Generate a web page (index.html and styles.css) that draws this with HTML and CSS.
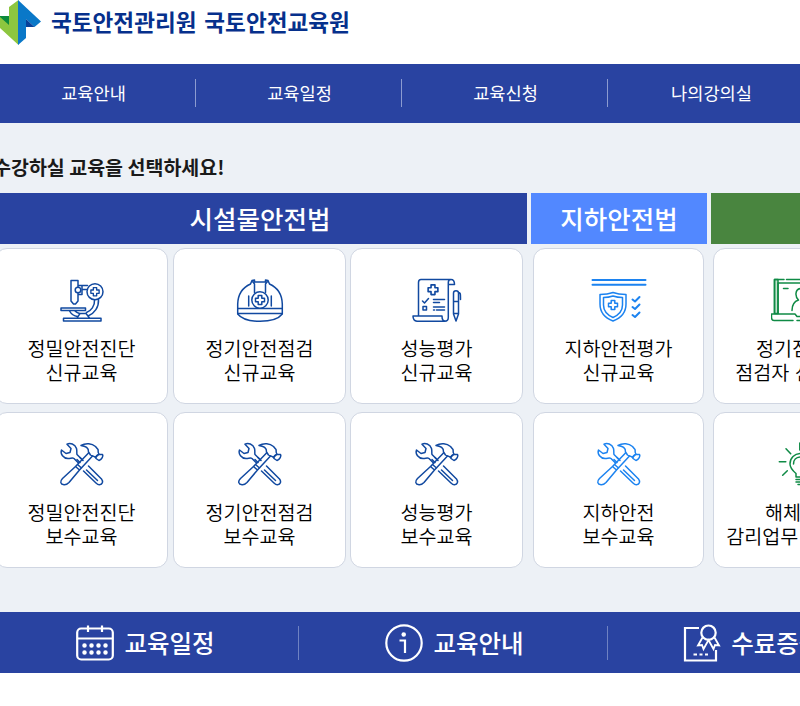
FILE: index.html
```html
<!DOCTYPE html>
<html lang="ko">
<head>
    <meta charset="UTF-8">
    <meta name="viewport" content="width=device-width, initial-scale=1.0">
    <title>국토안전관리원 국토안전교육원</title>

    <link rel="stylesheet" href="styles.css">
</head>
<body>

    <!-- Shared icons -->
    <svg class="icon-defs" width="0" height="0">
        <symbol id="plus" viewBox="0 0 12 12">
            <path d="M4.2 1.5h3.6v2.7h2.7v3.6H7.8v2.7H4.2V7.8H1.5V4.2h2.7z"/>
        </symbol>
        <symbol id="tools" viewBox="0 0 60 48">
            <path d="M15 4.200C18 2.500 23 4 24.500 8.500C25.200 11 24.500 13 25 14.500L31 20.500M15 4.200L19 8.500L18 12.500L14 13.500L9.500 10C8 14 11.500 18.500 16 18.500C19 18.500 20.500 17.500 22 18.500L26.500 23"/>
            <path d="M36.500 26L49.500 39C51.500 41.500 50.500 44.500 47.500 44.800C46 45 45 44 44 43L31.500 31M28 17.500L30.500 20M25 19.500L28 22.500M34.500 30L45.500 40.500"/>
            <path d="M29 5.500C34 2.500 40 3.500 43.500 6.500L46 9.500C46.500 11 45.500 13 47 14L43.500 17.500C42 16 40 16 38.500 15L36.500 12C37 8 33.500 6 29 5.500z"/>
            <path d="M47 14.500L50.500 14.500C51.500 16 50 19.500 47 20.500L44 18.500C43.500 16.500 45 14.500 47 14.500z"/>
            <path d="M36.500 13L23.500 26.500L27.500 30L40.500 16M23.500 26.500L10.500 38.500C7.500 41.500 8.500 44.500 12 44.800C14 45 15.500 44 17 42.500L27.500 30M25.500 24.500L29.500 28"/>
        </symbol>
    </svg>

    <div class="page">

        <!-- Logo -->
        <div class="header">
            <svg class="logo" width="54" height="50" viewBox="0 0 54 50">
                <path fill="#8dc63f" d="M30.500 0v45L11 27V16h10V7z"/>
                <path fill="#0c8a3c" d="M11 16h10v9z"/>
                <path fill="#0a78c8" d="M30 0L53 21.500L46.500 27L38 19V38L30 45z"/>
                <path fill="#06419a" d="M38 19v8h8.500z"/>
            </svg>
            <h1>국토안전관리원 국토안전교육원</h1>
        </div>

        <!-- Navbar -->
        <div class="navbar">
            <a href="#">교육안내</a>
            <a href="#">교육일정</a>
            <a href="#">교육신청</a>
            <a href="#">나의강의실</a>
        </div>

        <!-- Main content -->
        <div class="container">
            <h2>수강하실 교육을 선택하세요!</h2>

            <div class="tabs">
                <div class="tab facility">시설물안전법</div>
                <div class="tab underground">지하안전법</div>
                <div class="tab building"></div>
            </div>

            <div class="courses">
                <a class="card" href="#">
                    <svg class="icon" viewBox="0 0 60 48">
                        <path d="M19 4.500h7v20.500l-2.500 3h-2L19 25zM27 9.500h8.500M30 13.500h5.500M30 9.500v9h-3"/>
                        <circle cx="26" cy="14" r="2.800" fill="#fff"/>
                        <circle cx="43" cy="15.700" r="8"/>
                        <use href="#plus" x="37.500" y="10.200" width="11" height="11"/>
                        <path d="M9 32h24.500v2.500H9zM11.500 42.300h37.500v2.700H11.500zM46.500 23.500C47 31 42.500 37.500 36 40M42.500 24C43 30 39 35 34.500 36.500M17.500 35c2 3.500 4.500 5 8 5.500M23 35c1.500 1.500 3 2 4.500 2.500M25 42l3-4.500h6l3.500 4.500"/>
                    </svg>
                    <span>정밀안전진단<br>신규교육</span>
                </a>
                <a class="card" href="#">
                    <svg class="icon" viewBox="0 0 60 48">
                        <path d="M24.500 16.500V8L22 4.500L20.500 8C12.500 11.500 8 19 7.700 28v10C12 43.500 22 45.300 30 45.300S48 43.500 52.300 38V28C52 19 47.500 11.500 39.500 8L38 4.500L35.500 8v8.500M22 4.500l2.500-.5V6h11V4l2.500 .500"/>
                        <path d="M7.700 32.500h44.600M7.700 37.500h44.600M18.700 20v10M41.300 20v10"/>
                        <circle cx="30" cy="24" r="8.200" fill="#fff"/>
                        <use href="#plus" x="24" y="18" width="12" height="12"/>
                    </svg>
                    <span>정기안전점검<br>신규교육</span>
                </a>
                <a class="card" href="#">
                    <svg class="icon" viewBox="0 0 60 48">
                        <path d="M11.500 39.500V6.500C11.500 4.500 12.500 3.500 14 3.500h30c2.500 0 3.500 1.500 3.500 5h-6M44 3.500c-2 0-2.700 1-2.700 3v35c0 2.500-1.500 3.700-3.500 3.700H10C7.500 45 6 43 6 40h29c0 3 .500 5 3 5"/>
                        <use href="#plus" x="19.500" y="7.200" width="13" height="13"/>
                        <path d="M15.500 25l2 2 4-4.500M16 30.500h3.500V34H16zM26.500 23.500h11M26.500 26.500h6M26.500 31h11M29.500 34h8M26.500 34h1"/>
                        <path d="M46.500 17c0-3 5-3 5 0v21L49 45l-2.500-7zM46.500 25.500h5M51.500 16.500c2 0 2 1 2 7M46.500 37.500h5"/>
                    </svg>
                    <span>성능평가<br>신규교육</span>
                </a>
                <a class="card sky" href="#">
                    <svg class="icon" viewBox="0 0 60 48">
                        <path class="thick" d="M3.500 4h53M3.500 8.700h53"/>
                        <path d="M11 18.500c5 0 9-.5 13-2 4 1.500 8 2 13 2V28c0 8-5 14-13 17C16 42 11 36 11 28z"/>
                        <path d="M14.500 21.500c4 0 6.500-.5 9.500-1.500 3 1 5.500 1.500 9.500 1.500V29c0 6-4 10-9.500 12.500C18.500 39 14.500 35 14.500 29z"/>
                        <use href="#plus" x="18" y="23" width="12" height="12"/>
                        <path class="thick" d="M43.500 23.500l2.500 2 4.500-4.500M43.500 31l2.500 2 4.500-4.500M43.500 39l2.500 2 4.500-4.500"/>
                    </svg>
                    <span>지하안전평가<br>신규교육</span>
                </a>
                <a class="card green" href="#">
                    <svg class="icon" viewBox="0 0 60 48">
                        <path class="shade" d="M3.500 3.500h3.500v34H3.500z"/>
                        <path d="M3.500 37.500V3.500H13M15.500 3.500H56v34M7 37.500V7h46v30.500M1 38h23l2 2.500h8l2-2.500h23v3.500c0 2-1 3-3 3H26M22 44.500H3c-2 0-2.500-1-2.500-3V38"/>
                        <path d="M12.500 12.500h4.500M21 34.500c0-6 2-9 6.500-10.500C24 21 23.500 13 30 12.500C36.500 13 36 21 32.500 24C37 25.500 39 28.500 39 34.500"/>
                    </svg>
                    <span>정기점검자<br>점검자 신규교육</span>
                </a>

                <a class="card" href="#">
                    <svg class="icon"><use href="#tools"/></svg>
                    <span>정밀안전진단<br>보수교육</span>
                </a>
                <a class="card" href="#">
                    <svg class="icon"><use href="#tools"/></svg>
                    <span>정기안전점검<br>보수교육</span>
                </a>
                <a class="card" href="#">
                    <svg class="icon"><use href="#tools"/></svg>
                    <span>성능평가<br>보수교육</span>
                </a>
                <a class="card sky" href="#">
                    <svg class="icon"><use href="#tools"/></svg>
                    <span>지하안전<br>보수교육</span>
                </a>
                <a class="card green" href="#">
                    <svg class="icon" viewBox="0 0 60 48">
                        <path d="M8.300 21.700h6.500M15 8.700l4.700 5M11.700 35.300l4.600-4.600M28.800 3v7M42 13.700l4.500-5M45 21.700h6.500M43 30.700l4.500 4.600"/>
                        <path d="M25 37v-3.500C21.500 30.500 19 28 19 24c0-6 4.500-10.500 10.500-10.500S40 18 40 24c0 4-2.500 6.500-6 9.500V37zM22.500 24c0-4 2.500-7 7-7M25 39.500h9M25 42h9M27 44.500h5"/>
                    </svg>
                    <span>해체공사<br>감리업무 신규교육</span>
                </a>
            </div>
        </div>

        <!-- Quick menu -->
        <div class="quick">
            <a href="#">
                <svg width="38" height="38" viewBox="0 0 38 38">
                    <rect x="1.200" y="4.500" width="35.600" height="31" rx="4"/>
                    <path d="M1.200 14.500h35.600M12 1.500v6.500M26 1.500v6.500"/>
                    <path class="dots" d="M8.500 21.500h.01M15.500 21.500h.01M22.500 21.500h.01M29.500 21.500h.01M8.500 28.500h.01M15.500 28.500h.01M22.500 28.500h.01M29.500 28.500h.01"/>
                </svg>
                교육일정
            </a>
            <a href="#">
                <svg width="38" height="38" viewBox="0 0 38 38">
                    <circle cx="19" cy="19" r="17.700"/>
                    <path d="M14.500 16.500h5.500v12.500"/>
                    <path class="dots" d="M18.700 10.500h.01"/>
                </svg>
                교육안내
            </a>
            <a href="#">
                <svg width="38" height="38" viewBox="0 0 38 38">
                    <path d="M16 4H2v32.500h31V26"/>
                    <circle cx="25.500" cy="8.700" r="7.200"/>
                    <path class="fine" d="M19.500 13.500L15 21.500l4-.5 1.500 4 5-9 5 9 1.500-4 4 .5-4.500-8"/>
                    <path d="M10.500 30.500h3.500M16.500 30.500h3M22 30.500h3"/>
                </svg>
                수료증출력
            </a>
        </div>
    </div>

</body>
</html>
```
FILE: styles.css
```css
/* Reset margins and padding */
* {
    margin: 0;
    padding: 0;
    box-sizing: border-box;
}

body {
    font-family: "Noto Sans CJK KR", "Noto Sans", sans-serif;
    background-color: #fff;
    overflow: hidden;
}

a {
    color: inherit;
    text-decoration: none;
}

.icon-defs {
    display: block;
}

/* Fixed width page, a little wider than the window on both sides */
.page {
    width: 1240px;
    margin-left: -11px;
}

/* Logo row */
.header {
    display: flex;
    height: 64px;
}

.logo {
    margin-right: 9px;
    margin-left: -1px;
}

.header h1 {
    font-size: 22.6px;
    line-height: 43px;
    font-weight: 700;
    color: #06308c;
    word-spacing: 1.5px;
    white-space: nowrap;
}

/* Navbar styling */
.navbar {
    display: flex;
    height: 59px;
    padding: 0 0 1px 1px;
    align-items: center;
    background-color: #2943a1;
    color: #fff;
}

.navbar a {
    width: 206px;
    padding-left: 2px;
    height: 28px;
    line-height: 28px;
    font-size: 17.6px;
    text-align: center;
    border-right: 1px solid #8c9bd0;
}

/* Main content styling */
.container {
    height: 489px;
    padding: 29px 0 0 4px;
    background-color: #edf1f6;
}

.container h2 {
    height: 41px;
    line-height: 29px;
    font-size: 19.5px;
    font-weight: 700;
    color: #1a1a1a;
    word-spacing: -1px;
}

/* Law tabs */
.tabs {
    display: flex;
    gap: 4px;
    margin-bottom: 4px;
}

.tab {
    height: 51px;
    line-height: 49px;
    font-size: 25.5px;
    font-weight: 500;
    color: #fff;
    text-align: center;
}

.facility {
    width: 534px;
    background-color: #2943a1;
}

.underground {
    width: 176px;
    background-color: #5288ff;
}

.building {
    width: 360px;
    background-color: #49853f;
}

/* Course cards */
.courses {
    display: grid;
    grid-template-columns: 178px 177px 183px 180px 176px;
    grid-auto-rows: 156px;
    row-gap: 8px;
    padding-left: 2px;
}

.card {
    width: 173px;
    padding-top: 27px;
    background-color: #fff;
    border: 1px solid #d0d6e2;
    border-radius: 12px;
    text-align: center;
    color: #000;
}

.card span {
    display: block;
    margin-top: 12px;
    font-size: 19.6px;
    line-height: 24px;
    font-weight: 350;
    white-space: nowrap;
}

.card.sky {
    width: 171px;
}

.card.green {
    width: 176px;
}

.icon {
    display: block;
    width: 60px;
    height: 48px;
    margin: 0 auto;
    fill: none;
    stroke: #1149a0;
    stroke-width: 1.5;
    stroke-linecap: round;
    stroke-linejoin: round;
}

.sky .icon {
    stroke: #1c83f0;
}

.green .icon {
    stroke: #0f8a45;
}

.icon .thick {
    stroke-width: 2;
}

.icon .shade {
    fill: #c4e3cf;
}

/* Quick menu */
.quick {
    display: flex;
    height: 61px;
    padding-left: 1px;
    align-items: center;
    background-color: #2943a1;
    color: #fff;
    font-size: 24.5px;
    font-weight: 500;
}

.quick a {
    display: flex;
    width: 309px;
    height: 34px;
    padding-left: 3px;
    align-items: center;
    justify-content: center;
    gap: 10px;
    border-right: 1px solid #6f82c2;
}

.quick svg {
    fill: none;
    stroke: #fff;
    stroke-width: 2.2;
}

.quick .fine {
    stroke-width: 1.8;
}

.quick .dots {
    stroke-width: 4.5;
    stroke-linecap: round;
}
```
